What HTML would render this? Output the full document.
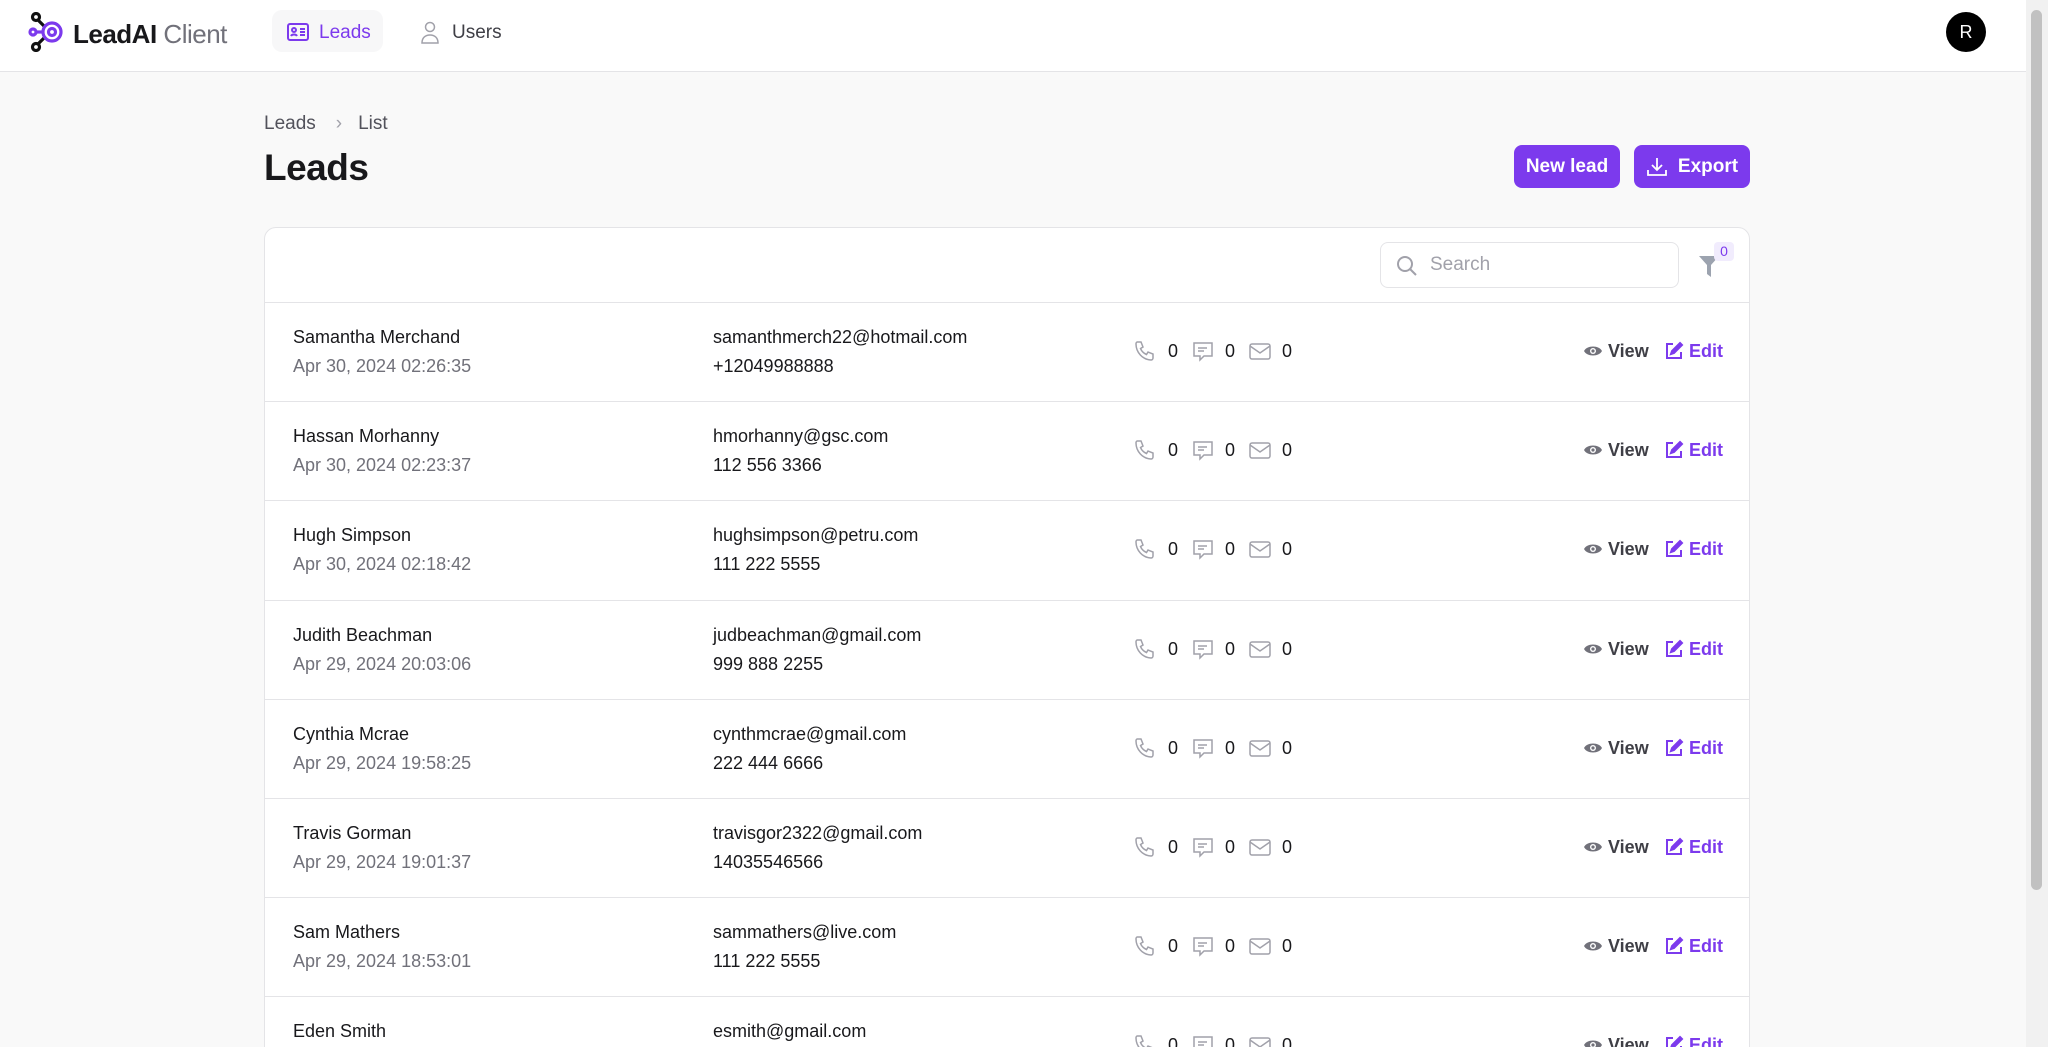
<!DOCTYPE html>
<html style="overflow:hidden;height:1047px"><head><meta charset="utf-8"><style>
*{box-sizing:border-box;margin:0;padding:0}
body{width:2048px;height:1047px;overflow:hidden;background:#f9f9f9;font-family:"Liberation Sans",sans-serif;color:#18181b;position:relative}
.nav{position:absolute;left:0;top:0;width:2026px;height:72px;background:#fff;border-bottom:1px solid #e4e4e7}
.abs{position:absolute}
.sb{position:absolute;right:0;top:0;width:22px;height:1047px;background:#f1f1f1}
.sb div{position:absolute;left:5px;top:10px;width:11px;height:880px;background:#c1c1c1;border-radius:6px}
.btn{position:absolute;top:145px;height:43px;background:#7c3aed;border-radius:8px;color:#fff;font-weight:bold;font-size:19px;display:flex;align-items:center;justify-content:center;gap:10px}
.card{position:absolute;left:264px;top:227px;width:1486px;height:850px;background:#fff;border:1px solid #e4e4e7;border-radius:12px}
.row{position:absolute;left:0;width:1484px;height:99px;border-top:1px solid #e4e4e7;font-size:18px}
.row .t{position:absolute}
.g{color:#71717a}
.pu{color:#7c3aed}
</style></head><body>
<div class="nav">
<svg class="abs" style="left:28px;top:12px" width="36" height="40" viewBox="0 0 36 40" fill="none" stroke="#7c3aed" stroke-width="3.2">
<circle cx="8" cy="5" r="3.5" stroke="#111"/><circle cx="8" cy="35" r="3.5" stroke="#111"/>
<path d="M10 8 L17 15 M10 32 L17 25" stroke="#111"/>
<circle cx="5" cy="20" r="3"/><path d="M8 20 H14"/><circle cx="24" cy="20" r="9"/><circle cx="24" cy="20" r="3.5"/>
</svg>
<div class="abs" style="left:73px;top:19px;font-size:26px;letter-spacing:-0.5px"><b>LeadAI</b> <span style="color:#71717a">Client</span></div>
<div class="abs" style="left:272px;top:10px;width:111px;height:42px;background:#f7f7f8;border-radius:10px"></div>
<svg class="abs" style="left:287px;top:23px" width="22" height="18" viewBox="0 0 22 18" fill="none" stroke="#7c3aed" stroke-width="2"><rect x="1" y="1" width="20" height="16" rx="2"/><circle cx="7" cy="7" r="2"/><path d="M4 13c1-2 5-2 6 0M13 6h5M13 9h5M13 12h5"/></svg>
<div class="abs pu" style="left:319px;top:22px;font-size:19px">Leads</div>
<svg class="abs" style="left:420px;top:21px" width="20" height="24" viewBox="0 0 20 24" fill="none" stroke="#a1a1aa" stroke-width="1.5"><circle cx="10" cy="6" r="4.5"/><path d="M2 22c0-5 3-8 8-8s8 3 8 8z"/></svg>
<div class="abs" style="left:452px;top:22px;font-size:19px;color:#3f3f46">Users</div>
<div class="abs" style="left:1946px;top:12px;width:40px;height:40px;border-radius:50%;background:#000;color:#fff;font-size:18px;display:flex;align-items:center;justify-content:center">R</div>
</div>
<div class="sb"><div></div></div>
<div class="abs g" style="left:264px;top:113px;font-size:19px;color:#52525b">Leads<span style="margin:0 16px 0 20px;color:#a1a1aa">›</span>List</div>
<div class="abs" style="left:264px;top:147px;font-size:37px;font-weight:bold;letter-spacing:-0.5px">Leads</div>
<div class="btn" style="left:1514px;width:106px">New lead</div>
<div class="btn" style="left:1634px;width:116px"><svg width="22" height="22" viewBox="0 0 22 22" fill="none" stroke="#fff" stroke-width="1.8"><path d="M11 2v12M6 9l5 5 5-5M2 14v5h18v-5"/></svg>Export</div>
<div class="card">
<div class="abs" style="left:1115px;top:14px;width:299px;height:46px;border:1px solid #e4e4e7;border-radius:8px"></div>
<svg class="abs" style="left:1131px;top:27px" width="22" height="22" viewBox="0 0 22 22" fill="none" stroke="#a1a1aa" stroke-width="2"><circle cx="9" cy="9" r="7"/><path d="M14 14l6 6"/></svg>
<div class="abs" style="left:1165px;top:26px;font-size:19px;color:#a1a1aa">Search</div>
<svg class="abs" style="left:1433px;top:26px" width="22" height="24" viewBox="0 0 22 24"><path d="M1 2h20l-8 9v12l-4-3v-9z" fill="#9ca3af"/></svg>
<div class="abs" style="left:1449px;top:14px;width:20px;height:19px;background:#f1ecfd;border-radius:4px;color:#7c3aed;font-size:14px;text-align:center;line-height:19px">0</div>
</div>
<div id="rows"></div>
<script>
const d=[["Samantha Merchand","Apr 30, 2024 02:26:35","samanthmerch22@hotmail.com","+12049988888"],["Hassan Morhanny","Apr 30, 2024 02:23:37","hmorhanny@gsc.com","112 556 3366"],["Hugh Simpson","Apr 30, 2024 02:18:42","hughsimpson@petru.com","111 222 5555"],["Judith Beachman","Apr 29, 2024 20:03:06","judbeachman@gmail.com","999 888 2255"],["Cynthia Mcrae","Apr 29, 2024 19:58:25","cynthmcrae@gmail.com","222 444 6666"],["Travis Gorman","Apr 29, 2024 19:01:37","travisgor2322@gmail.com","14035546566"],["Sam Mathers","Apr 29, 2024 18:53:01","sammathers@live.com","111 222 5555"],["Eden Smith","","esmith@gmail.com",""]];
const ph='<svg width="24" height="24" viewBox="0 0 24 24" fill="none" stroke="#a1a1aa" stroke-width="1.5"><path d="M4 3h4l2 5-2.5 1.5a11 11 0 0 0 6 6L15 13l5 2v4a2 2 0 0 1-2 2A16 16 0 0 1 3 5a2 2 0 0 1 1-2z"/></svg>';
const cm='<svg width="24" height="24" viewBox="0 0 24 24" fill="none" stroke="#a1a1aa" stroke-width="1.5"><path d="M3 4h18v13h-8l-4 4v-4H3z M7 9h9M7 12h6"/></svg>';
const ml='<svg width="24" height="24" viewBox="0 0 24 24" fill="none" stroke="#a1a1aa" stroke-width="1.5"><rect x="2" y="5" width="20" height="15" rx="2"/><path d="M2 7l10 7 10-7"/></svg>';
let h='';
d.forEach((r,i)=>{const y=302+i*99.2;
h+=`<div class="row" style="left:265px;top:${y}px">
<div class="t" style="left:28px;top:24px">${r[0]}</div><div class="t g" style="left:28px;top:53px">${r[1]}</div>
<div class="t" style="left:448px;top:24px">${r[2]}</div><div class="t" style="left:448px;top:53px">${r[3]}</div>
<div class="t" style="left:868px;top:36px">${ph}</div><div class="t" style="left:903px;top:38px">0</div>
<div class="t" style="left:926px;top:36px">${cm}</div><div class="t" style="left:960px;top:38px">0</div>
<div class="t" style="left:983px;top:36px">${ml}</div><div class="t" style="left:1017px;top:38px">0</div>
<svg class="t" style="left:1318px;top:40px" width="20" height="16" viewBox="0 0 20 16"><path d="M1 8C4 2 16 2 19 8C16 14 4 14 1 8z" fill="#71717a"/><circle cx="10" cy="8" r="3" fill="#fff"/><circle cx="10" cy="8" r="1.6" fill="#71717a"/></svg>
<div class="t" style="left:1343px;top:38px;font-weight:bold;color:#3f3f46">View</div>
<svg class="t" style="left:1399px;top:38px" width="20" height="20" viewBox="0 0 20 20" fill="none" stroke="#7c3aed" stroke-width="2"><path d="M9 3H3v14h14v-6"/><path d="M16 2l2 2-8 8-3 1 1-3z" fill="#7c3aed"/></svg>
<div class="t pu" style="left:1424px;top:38px;font-weight:bold">Edit</div></div>`});
document.getElementById('rows').innerHTML=h;
</script>
</body></html>
